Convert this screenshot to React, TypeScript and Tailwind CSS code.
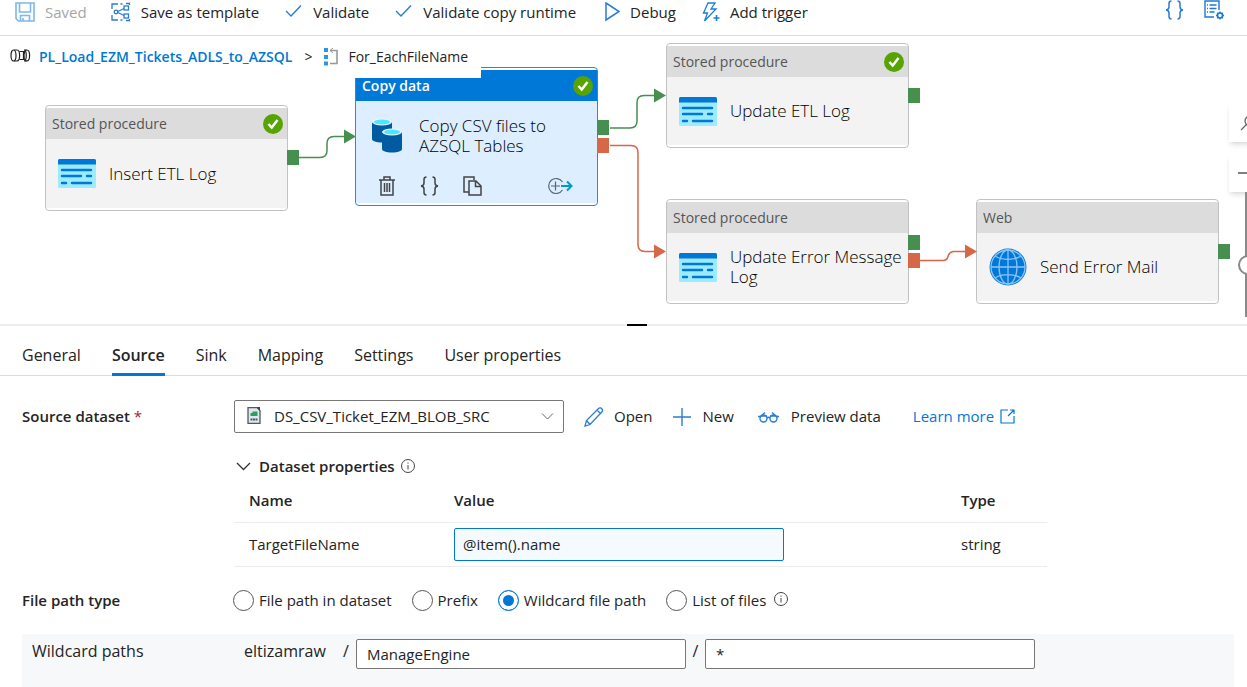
import { useState, type ReactNode } from "react";

type Status = "green" | "orange";

const PORT_COLORS: Record<Status, string> = {
  green: "bg-[#478f4f]",
  orange: "bg-[#d66747]",
};

const TABS = ["General", "Source", "Sink", "Mapping", "Settings", "User properties"];

const PATH_TYPES = ["File path in dataset", "Prefix", "Wildcard file path", "List of files"];

function SaveIcon() {
  return (
    <svg width="20" height="20" viewBox="0 0 20 20" fill="none" stroke="#7db7ea" strokeWidth="1.6">
      <path d="M1 1h18v18H3.500L1 16.500z" />
      <path d="M4.500 1v9h11V1M5.500 19v-5.500h9V19M8 19v-3" />
    </svg>
  );
}

function TemplateIcon() {
  return (
    <svg width="20" height="20" viewBox="0 0 20 20" fill="none" stroke="#2b7cd3" strokeWidth="1.300">
      <path d="M1 7V2h6M1 13v5h6M9.500 2h2M9.500 18h2M15 1.500h3.500V3M15 18.500h3.500V17" />
      <rect x="13" y="4" width="4.500" height="4" />
      <rect x="13" y="12" width="4.500" height="4" />
      <circle cx="5" cy="10" r="1.800" />
      <path d="M6.800 9.500L13 6.500M6.800 10.500l6.200 3" />
    </svg>
  );
}

function CheckIcon() {
  return (
    <svg width="20" height="18" viewBox="0 0 20 18" fill="none" stroke="#2b7cd3" strokeWidth="1.400">
      <path d="M3 8l5 5L18 2.500" />
    </svg>
  );
}

function PlayIcon() {
  return (
    <svg width="20" height="20" viewBox="0 0 20 20" fill="none" stroke="#2b7cd3" strokeWidth="1.500">
      <path d="M6 1l13 8.500L6 18z" />
    </svg>
  );
}

function TriggerIcon() {
  return (
    <svg width="20" height="20" viewBox="0 0 20 20" fill="none" stroke="#1a7fd4" strokeWidth="1.300">
      <path d="M8 1h7l-4 6h5L4.500 19l3-8h-4z" />
      <path d="M16.500 13v6M13.500 16h6" strokeWidth="1.600" />
    </svg>
  );
}

function BracesIcon({ color = "#2b7cd3" }: { color?: string }) {
  return (
    <svg width="19" height="20" viewBox="0 0 19 20" fill="none" stroke={color} strokeWidth="1.500">
      <path d="M6.500 1C4.500 1 4 2 4 3.500V7c0 1.800-1 2.800-3 3 2 .2 3 1.200 3 3v3.500C4 18 4.500 19 6.500 19" />
      <path d="M12.500 1c2 0 2.500 1 2.500 2.500V7c0 1.800 1 2.800 3 3-2 .2-3 1.200-3 3v3.500c0 1.500-.5 2.500-2.500 2.500" />
    </svg>
  );
}

function PropertiesIcon() {
  return (
    <svg width="21" height="20" viewBox="0 0 21 20" fill="none" stroke="#1a78d6" strokeWidth="1.400">
      <path d="M10 17H1V1h14v9" />
      <path d="M3 5h1M5.500 5h7M3 8.500h1M5.500 8.500h7M3 12h1M5.500 12h5" />
      <circle cx="16" cy="15.500" r="2.500" strokeWidth="1.600" />
      <path d="M16 11.500v1.500M16 18v1.500M12 15.500h1.500M18.500 15.500H20M13.200 12.700l1 1M17.800 17.300l1 1M18.800 12.700l-1 1M14.200 17.300l-1 1" />
    </svg>
  );
}

function PipelineIcon() {
  return (
    <svg width="21" height="16" viewBox="0 0 21 16" fill="none" stroke="#222" strokeWidth="1.200" className="shrink-0">
      <ellipse cx="3.500" cy="6.500" rx="2.500" ry="5.500" />
      <path d="M4 1h3c3.500 0 3.500 11 0 11H4" />
      <path d="M9.500 2.500h4v8h-4" />
      <ellipse cx="16.800" cy="6.500" rx="2.800" ry="5.500" />
      <path d="M16.500 1H14c3 0 3 11 0 11h2.500" />
    </svg>
  );
}

function LoopIcon() {
  return (
    <svg width="14" height="18" viewBox="0 0 14 18" fill="none" className="shrink-0">
      <path d="M0 0h4v4H0zM0 7h4v4H0zM0 13.500h4v4H0z" fill="#2b95e8" />
      <path d="M6 2.500h7v13H6" stroke="#999" strokeWidth="1.600" />
      <path d="M9 0L6 2.500 9 5" stroke="#999" />
    </svg>
  );
}

function ProcedureIcon() {
  return (
    <svg width="38" height="29" viewBox="0 0 38 29">
      <rect width="38" height="29" rx="1.500" fill="#9cebff" />
      <path d="M0 1.500Q0 0 1.500 0h35Q38 0 38 1.500V5.500H0z" fill="#0078d7" />
      <path d="M4 11h29M4 17h19M29 17h4M4 24h4M14 24h19" stroke="#0078d7" strokeWidth="2.400" strokeLinecap="round" />
    </svg>
  );
}

function DatabasesIcon() {
  return (
    <svg width="32" height="36" viewBox="0 0 32 36">
      <path d="M1 4v17c0 2 4.500 3.500 10 3.500S21 23 21 21V4z" fill="#005ba1" />
      <ellipse cx="11" cy="4" rx="10" ry="3.500" fill="#e8f4fb" />
      <ellipse cx="11" cy="4" rx="8" ry="2.400" fill="#50e6ff" />
      <path d="M11 14v17c0 2 4.500 3.500 10 3.500S31 33 31 31V14z" fill="#005ba1" />
      <ellipse cx="21" cy="14" rx="10" ry="3.500" fill="#e8f4fb" />
      <ellipse cx="21" cy="14" rx="8" ry="2.400" fill="#50e6ff" />
    </svg>
  );
}

function GlobeIcon() {
  return (
    <svg width="38" height="38" viewBox="0 0 38 38" fill="none" stroke="#8cc4f8" strokeWidth="1.300">
      <circle cx="19" cy="19" r="18.500" fill="#0078d7" stroke="none" />
      <circle cx="19" cy="19" r="17" />
      <ellipse cx="19" cy="19" rx="9" ry="17" />
      <path d="M2 19h34M19 2v34M6 8c7 4.500 19 4.500 26 0M6 30c7-4.500 19-4.500 26 0" />
    </svg>
  );
}

function SuccessBadge() {
  return (
    <svg width="20" height="20" viewBox="0 0 20 20" fill="none" role="img" aria-label="Succeeded">
      <circle cx="10" cy="10" r="10" fill="#57a300" />
      <path d="M5.500 10l3.200 3.500L14.500 6" stroke="#fff" strokeWidth="2.500" />
    </svg>
  );
}

function InfoIcon() {
  return (
    <svg width="14" height="14" viewBox="0 0 14 14" fill="none" stroke="#444">
      <circle cx="7" cy="7" r="6.500" />
      <path d="M7 6v4.500M7 3.500v1.200" />
    </svg>
  );
}

function ToolbarButton({ icon, label, muted }: { icon: ReactNode; label: string; muted?: boolean }) {
  return (
    <button className={`flex items-center gap-2.5 ${muted ? "text-[#a6a6a6]" : ""}`}>
      {icon}
      {label}
    </button>
  );
}

interface ActivityProps {
  type: string;
  name: string;
  icon: ReactNode;
  position: string;
  ports: { status: Status; top: string }[];
  succeeded?: boolean;
  selected?: boolean;
}

function Activity({ type, name, icon, position, ports, succeeded, selected }: ActivityProps) {
  return (
    <div className={`absolute w-[243px] ${position}`}>
      <div
        className={`flex h-full flex-col rounded-[4px] border bg-white py-0.5 ${
          selected ? "border-[#2b8fbd]" : "border-[#c2c2c2]"
        }`}
      >
        <div
          className={`flex h-[31px] shrink-0 items-center justify-between pr-1 pl-1.5 text-sm ${
            selected ? "bg-[#0078d7] font-semibold text-white" : "bg-[#dcdcdc] text-[#555]"
          }`}
        >
          {type}
          {succeeded && <SuccessBadge />}
        </div>
        <div className={`flex grow flex-col justify-center ${selected ? "bg-[#dceeff] pt-2" : "bg-[#f3f3f3]"}`}>
          <div className="flex items-center pl-3">
            <span className="flex w-[38px] shrink-0 justify-center">{icon}</span>
            <span className={`pl-[13px] text-[17px] leading-5 font-light text-black ${selected ? "w-44" : "w-[190px]"}`}>
              {name}
            </span>
          </div>
          {selected && (
            <div className="mt-5 flex items-center gap-6 pr-6 pl-[22px]">
              <button aria-label="Delete">
                <svg width="18" height="20" viewBox="0 0 18 20" fill="none" stroke="#444" strokeWidth="1.500">
                  <path d="M1 4h16M6 4V1h6v3M3 4v15h12V4M6.500 7v9M9 7v9M11.500 7v9" />
                </svg>
              </button>
              <button aria-label="Code">
                <BracesIcon color="#444" />
              </button>
              <button aria-label="Clone">
                <svg width="19" height="20" viewBox="0 0 19 20" fill="none" stroke="#444" strokeWidth="1.500">
                  <path d="M6 16H1V1h10v3" />
                  <path d="M6 5h7l5 5v9H6zM12.500 5v5.500H18" />
                </svg>
              </button>
              <button aria-label="Add output" className="ml-auto">
                <svg width="26" height="18" viewBox="0 0 26 18" fill="none">
                  <path d="M15.500 5a7.500 7.500 0 1 0 0 8M8.500 4.500v9M4 9h9" stroke="#567" strokeWidth="1.200" />
                  <path d="M14 9h10M20 4.500L24.500 9 20 13.500" stroke="#0099cc" strokeWidth="2" />
                </svg>
              </button>
            </div>
          )}
        </div>
      </div>
      {ports.map((port) => (
        <span
          key={port.status}
          className={`absolute left-[242px] h-[15px] w-3 ${port.top} ${PORT_COLORS[port.status]}`}
        />
      ))}
    </div>
  );
}

function Canvas() {
  return (
    <section className="relative h-72 overflow-hidden">
      <Activity
        type="Stored procedure"
        name="Insert ETL Log"
        icon={<ProcedureIcon />}
        position="left-[45px] top-[69px] h-[106px]"
        ports={[{ status: "green", top: "top-[45px]" }]}
        succeeded
      />
      <Activity
        type="Copy data"
        name="Copy CSV files to AZSQL Tables"
        icon={<DatabasesIcon />}
        position="left-[355px] top-[31px] h-[139px]"
        ports={[
          { status: "green", top: "top-[53px]" },
          { status: "orange", top: "top-[71px]" },
        ]}
        succeeded
        selected
      />
      <Activity
        type="Stored procedure"
        name="Update ETL Log"
        icon={<ProcedureIcon />}
        position="left-[666px] top-[7px] h-[105px]"
        ports={[{ status: "green", top: "top-[45px]" }]}
        succeeded
      />
      <Activity
        type="Stored procedure"
        name="Update Error Message Log"
        icon={<ProcedureIcon />}
        position="left-[666px] top-[163px] h-[105px]"
        ports={[
          { status: "green", top: "top-[36px]" },
          { status: "orange", top: "top-[54px]" },
        ]}
      />
      <Activity
        type="Web"
        name="Send Error Mail"
        icon={<GlobeIcon />}
        position="left-[976px] top-[163px] h-[105px]"
        ports={[{ status: "green", top: "top-[45px]" }]}
      />

      {/* Connections */}
      <svg className="pointer-events-none absolute top-0 left-0" width="1247" height="288" fill="none" strokeWidth="1.500">
        <g stroke="#478f4f">
          <path d="M299 121.500h21q7 0 7-7v-7q0-7 7-7h10" />
          <path d="M610 92h20q7 0 7-7V66.500q0-7 7-7h10" />
        </g>
        <g stroke="#d66747">
          <path d="M610 109.500h21q7 0 7 7v92q0 7 7 7h10" />
          <path d="M920 224.500h23q4 0 5-4t5-5h12" />
        </g>
        <path d="M344 93.500l12 7-12 7zM654 52.500l12 7-12 7z" fill="#478f4f" />
        <path d="M654 208.500l12 7-12 7zM965 208.500l12 7-12 7z" fill="#d66747" />
      </svg>

      {/* Breadcrumb */}
      <nav className="relative flex h-[42px] w-[481px] items-center bg-white pl-2.5 text-sm" aria-label="Breadcrumb">
        <PipelineIcon />
        <a href="#pipeline" className="ml-2 font-semibold text-[#0078d4]">
          PL_Load_EZM_Tickets_ADLS_to_AZSQL
        </a>
        <span className="mx-3">&gt;</span>
        <LoopIcon />
        <span className="ml-2.5">For_EachFileName</span>
      </nav>

      {/* Zoom controls, cut off by the window edge */}
      <div className="absolute top-[68px] -right-5 flex w-[38px] flex-col items-center">
        <button className="flex size-[38px] items-center justify-center bg-white shadow-md" aria-label="Search">
          <svg width="16" height="16" viewBox="0 0 16 16" fill="none" stroke="#666" strokeWidth="1.300">
            <circle cx="10" cy="6" r="5" />
            <path d="M6.500 9.500L1 15" />
          </svg>
        </button>
        <button className="mt-3 flex size-[38px] items-center justify-center bg-white shadow-md" aria-label="Zoom in">
          <svg width="20" height="20" viewBox="0 0 20 20" stroke="#555" strokeWidth="1.500">
            <path d="M0 10h20M10 0v20" />
          </svg>
        </button>
        <div className="flex h-[125px] w-1.5 items-center justify-center bg-[#8a8a8a]">
          <span className="mt-5 size-5 shrink-0 rounded-full border-2 border-[#8a8a8a] bg-white" />
        </div>
      </div>
    </section>
  );
}

function SourceTab() {
  const [pathType, setPathType] = useState("Wildcard file path");

  return (
    <div className="pt-6 text-[15px]">
      {/* Source dataset */}
      <div className="flex h-[33px] items-center pl-[22px]">
        <label htmlFor="dataset" className="w-[212px] shrink-0 font-semibold">
          Source dataset <span className="font-normal text-[#a4262c]">*</span>
        </label>
        <div className="relative w-[330px]">
          <select
            id="dataset"
            className="h-[33px] w-full appearance-none rounded-[2px] border border-[#777] bg-white pl-[39px]"
          >
            <option>DS_CSV_Ticket_EZM_BLOB_SRC</option>
          </select>
          <svg className="pointer-events-none absolute top-[7px] left-3" width="16" height="17" viewBox="0 0 16 17">
            <path d="M2 .5h9L14 3.500v13H2z" fill="#dfe8ee" stroke="#4b5a66" strokeWidth="1.300" />
            <path d="M4.500 9V6h2V4.500h5V9z" fill="#2f9e5b" />
            <path d="M4.500 12.500h7" stroke="#4b5a66" strokeWidth="1.800" strokeDasharray="2 .5" />
            <path d="M11 0h3v4z" fill="#35424d" />
          </svg>
          <svg
            className="pointer-events-none absolute top-3 right-2.5"
            width="13"
            height="9"
            viewBox="0 0 13 9"
            fill="none"
            stroke="#666"
          >
            <path d="M1 1.500l5.500 5.500L12 1.500" />
          </svg>
        </div>
        <button className="ml-5 flex items-center gap-2.5">
          <svg width="20" height="20" viewBox="0 0 20 20" fill="none" stroke="#2b7cd3" strokeWidth="1.300">
            <path d="M1 19l1.500-5.500L14.500 1.500c1-1 2.500-.7 3.300.2s1 2.300 0 3.300L6 17.500zM2.500 13.500L6 17.500M13 3l4 4" />
          </svg>
          Open
        </button>
        <button className="ml-5 flex items-center gap-2.5">
          <svg width="20" height="20" viewBox="0 0 20 20" fill="none" stroke="#2b7cd3" strokeWidth="1.400">
            <path d="M1 10h18M10 1v18" />
          </svg>
          New
        </button>
        <button className="ml-6 flex items-center gap-3">
          <svg width="21" height="12" viewBox="0 0 21 12" fill="none" stroke="#2b7cd3" strokeWidth="1.400">
            <circle cx="5.500" cy="7.500" r="3.500" />
            <circle cx="15.500" cy="7.500" r="3.500" />
            <path d="M9 7q1.500-1.500 3 0M0 5.500h2.500L7 1.500M21 5.500h-2.500L14 1.500M2.500 5h6.500M12 5h6.500" />
          </svg>
          Preview data
        </button>
        <a href="#learn" className="ml-8 flex items-center gap-1.5 text-[#0078d4]">
          Learn more
          <svg width="15" height="15" viewBox="0 0 15 15" fill="none" stroke="#0078d4" strokeWidth="1.200">
            <path d="M8 1H1v13h13V7M10 1h4v4M14 1L8 7" />
          </svg>
        </a>
      </div>

      {/* Dataset properties */}
      <div className="ml-[234px] max-w-[813px]">
        <div className="mt-5 flex h-[26px] items-center font-semibold">
          <button className="flex items-center gap-2 pl-0.5" aria-expanded="true">
            <svg width="15" height="9" viewBox="0 0 15 9" fill="none" stroke="#333" strokeWidth="1.300">
              <path d="M1 1l6.500 6.500L14 1" />
            </svg>
            Dataset properties
          </button>
          <span className="ml-1.5">
            <InfoIcon />
          </span>
        </div>
        <table className="w-full table-fixed text-left">
          <thead>
            <tr className="h-[43px] border-b border-[#ececec]">
              <th className="w-[220px] pl-[15px] font-semibold">Name</th>
              <th className="font-semibold">Value</th>
              <th className="w-[86px] font-semibold">Type</th>
            </tr>
          </thead>
          <tbody>
            <tr className="h-11 border-b border-[#ececec]">
              <td className="pl-[15px]">TargetFileName</td>
              <td>
                <input
                  aria-label="TargetFileName"
                  defaultValue="@item().name"
                  className="block h-[33px] w-[330px] rounded-[2px] border border-[#0078d4] bg-[#f5faff] px-2"
                />
              </td>
              <td>string</td>
            </tr>
          </tbody>
        </table>
      </div>

      {/* File path type */}
      <fieldset className="mt-5 flex h-7 items-center pl-[22px]">
        <legend className="float-left w-[211px] font-semibold">File path type</legend>
        <div className="flex items-center gap-5">
          {PATH_TYPES.map((type) => (
            <label key={type} className="flex items-center gap-[5px]">
              <input
                type="radio"
                name="pathType"
                checked={pathType === type}
                onChange={() => setPathType(type)}
                className="size-[21px] appearance-none rounded-full border border-[#555] bg-white checked:border-[#0078d4] checked:bg-[#0078d4] checked:shadow-[inset_0_0_0_4px_white]"
              />
              {type}
            </label>
          ))}
        </div>
        <span className="mb-1 ml-2">
          <InfoIcon />
        </span>
      </fieldset>

      {/* Wildcard paths */}
      <div className="mt-[19px] mr-[13px] ml-[22px] flex h-[53px] items-start bg-[#f6f8fa] pt-[5px] pl-2.5">
        <span className="w-[212px] shrink-0 text-base">Wildcard paths</span>
        <span className="w-[99px] shrink-0 text-base">eltizamraw</span>
        <span className="w-[13px] shrink-0 text-base">/</span>
        <input
          aria-label="Wildcard folder path"
          defaultValue="ManageEngine"
          className="h-[30px] w-[330px] rounded-[2px] border border-[#777] bg-white px-2.5"
        />
        <span className="w-[19px] shrink-0 text-center text-base">/</span>
        <input
          aria-label="Wildcard file name"
          defaultValue="*"
          className="h-[30px] w-[330px] rounded-[2px] border border-[#777] bg-white px-2.5"
        />
      </div>
    </div>
  );
}

export default function App() {
  const [tab, setTab] = useState("Source");

  return (
    <main className="overflow-hidden bg-white font-['Open_Sans','Noto_Sans',sans-serif] text-[#242424]">
      <header className="flex h-9 items-start gap-6 border-b border-[#dcdcdc] pl-[15px] text-[15px] leading-6">
        <ToolbarButton icon={<SaveIcon />} label="Saved" muted />
        <ToolbarButton icon={<TemplateIcon />} label="Save as template" />
        <ToolbarButton icon={<CheckIcon />} label="Validate" />
        <ToolbarButton icon={<CheckIcon />} label="Validate copy runtime" />
        <ToolbarButton icon={<PlayIcon />} label="Debug" />
        <ToolbarButton icon={<TriggerIcon />} label="Add trigger" />
        <div className="ml-auto flex gap-5 pr-[22px]">
          <button aria-label="Code">
            <BracesIcon />
          </button>
          <button aria-label="Properties">
            <PropertiesIcon />
          </button>
        </div>
      </header>

      <Canvas />

      <div className="flex h-0.5 justify-center bg-[#ededed] pl-[27px]">
        <span className="w-5 bg-black" />
      </div>

      <div role="tablist" className="flex h-[50px] gap-[31px] border-b border-[#dcdcdc] pl-[22px] text-base">
        {TABS.map((name) => (
          <button
            key={name}
            role="tab"
            aria-selected={tab === name}
            onClick={() => setTab(name)}
            className={`-mb-px border-b-[3px] pt-3.5 pb-[3px] ${
              tab === name ? "border-[#0078d4] font-semibold" : "border-transparent"
            }`}
          >
            {name}
          </button>
        ))}
      </div>

      <SourceTab />
    </main>
  );
}
